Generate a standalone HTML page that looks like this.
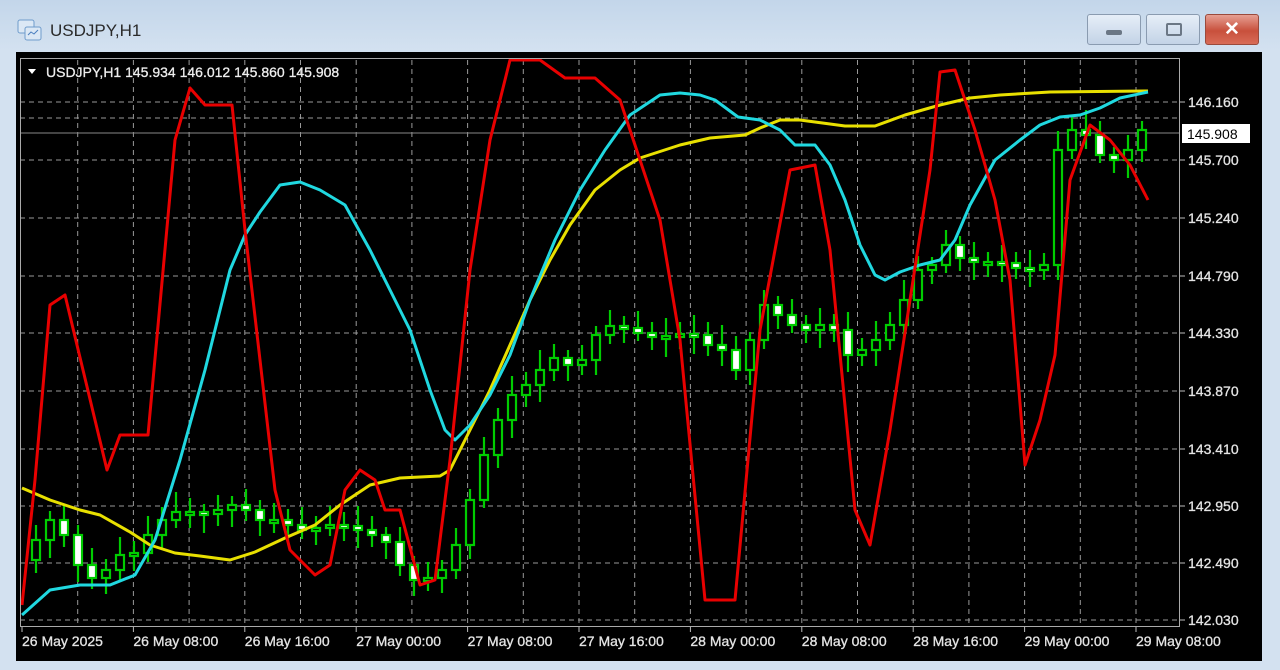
<!DOCTYPE html>
<html><head><meta charset="utf-8"><style>
html,body{margin:0;padding:0;width:1280px;height:670px;overflow:hidden;background:#cddcec;font-family:"Liberation Sans",sans-serif}
.win{position:absolute;left:0;top:0;width:1280px;height:670px;background:linear-gradient(#c3d6ea,#d3e1f0 50px,#d3e1f0)}
.title{position:absolute;left:50px;top:21px;font-size:17px;color:#2a2a2a}
.btn{position:absolute;top:14px;height:29px;border:1px solid #8a9bb0;border-radius:3px;background:linear-gradient(#e6eef8,#c3d3e6)}
</style></head><body><div class="win">
<svg style="position:absolute;left:16px;top:18px" width="28" height="26" viewBox="0 0 28 26"><rect x="2" y="2" width="16" height="13" rx="2" fill="#dbe8f5" stroke="#6f9ccc"/><rect x="9" y="9" width="16" height="13" rx="2" fill="#dbe8f5" stroke="#6f9ccc"/><path d="M12 17l3-3 3 2 4-4" stroke="#4a7fbf" fill="none"/></svg>
<div class="title">USDJPY,H1</div>
<div class="btn" style="left:1087px;width:52px"><div style="position:absolute;left:18px;top:15px;width:16px;height:5px;background:#6b7785;border-radius:2px"></div></div>
<div class="btn" style="left:1146px;width:52px"><div style="position:absolute;left:19px;top:8px;width:12px;height:9px;border:2px solid #6b7785;border-radius:2px"></div></div>
<div class="btn" style="left:1205px;width:52px;background:linear-gradient(#e6a093,#c8503c 55%,#d86c58);border-color:#9a4a3c"><div style="position:absolute;left:0;top:3px;width:52px;text-align:center;color:#fff;font-weight:bold;font-size:19px">✕</div></div>
<svg id="c" style="position:absolute;left:16px;top:52px" width="1246" height="609" viewBox="16 52 1246 609"></svg>
</div>
<script>
var s=document.getElementById('c'),h='';
h+='<rect x="16" y="52" width="1246" height="609" fill="#000"/>';
var ys=[102,160,218,276,333,391,449,506,563,620],lb=['146.160','145.700','145.240','144.790','144.330','143.870','143.410','142.950','142.490','142.030'];
for(var i=0;i<ys.length;i++){h+='<line x1="20" x2="1180" y1="'+ys[i]+'" y2="'+ys[i]+'" stroke="#999" stroke-dasharray="5,4"/>';h+='<line x1="1180" x2="1185" y1="'+ys[i]+'" y2="'+ys[i]+'" stroke="#bbb"/>';h+='<text x="1188" y="'+(ys[i]+5)+'" fill="#e4e4e4" font-size="14" stroke="#e4e4e4" stroke-width="0.3">'+lb[i]+'</text>';}
h+='<line x1="20" x2="1180" y1="118" y2="118" stroke="#999" stroke-dasharray="5,4"/>';
for(var k=1;k<21;k++){var x=22+55.7*k;if(x<1178)h+='<line x1="'+x+'" x2="'+x+'" y1="60" y2="625" stroke="#999" stroke-dasharray="5,4"/>';}
var tl=['26 May 2025','26 May 08:00','26 May 16:00','27 May 00:00','27 May 08:00','27 May 16:00','28 May 00:00','28 May 08:00','28 May 16:00','29 May 00:00','29 May 08:00'];
for(var k=0;k<tl.length;k++){var x=22+111.4*k;h+='<line x1="'+x+'" x2="'+x+'" y1="627" y2="632" stroke="#bbb"/><text x="'+x+'" y="646" fill="#e4e4e4" font-size="14" stroke="#e4e4e4" stroke-width="0.3">'+tl[k]+'</text>';}
h+='<line x1="20" x2="1180" y1="133" y2="133" stroke="#888"/>';
var m=[[22,560],[36,540],[50,520],[64,535],[78,565],[92,578],[106,570],[120,555],[134,553],[148,535],[162,520],[176,512],[190,512],[204,514],[218,510],[232,505],[246,510],[260,520],[274,520],[288,525],[302,530],[316,528],[330,525],[344,526],[358,530],[372,535],[386,542],[400,565],[414,580],[428,578],[442,570],[456,545],[470,500],[484,455],[498,420],[512,395],[526,385],[540,370],[554,358],[568,365],[582,360],[596,335],[610,326],[624,328],[638,333],[652,337],[666,336],[680,334],[694,335],[708,345],[722,350],[736,370],[750,340],[764,305],[778,315],[792,325],[806,330],[820,325],[834,330],[848,355],[862,350],[876,340],[890,325],[904,300],[918,270],[932,265],[946,245],[960,258],[974,262],[988,262],[1002,263],[1016,268],[1030,270],[1044,265],[1058,150],[1072,130],[1086,135],[1100,155],[1114,160],[1128,150],[1142,130]];
for(var i=1;i<m.length;i++){var x=m[i][0],o=m[i-1][1],c=m[i][1],t=Math.min(o,c),b=Math.max(o,c);if(b-t<3){b=t+3;}
var hh=8+(i*7%13),ll=8+(i*5%11);
h+='<line x1="'+x+'" x2="'+x+'" y1="'+(t-hh)+'" y2="'+(b+ll)+'" stroke="#0c0" stroke-width="2.2"/>';
h+='<rect x="'+(x-4)+'" y="'+t+'" width="8" height="'+(b-t)+'" fill="'+(c>o?'#fff':'#000')+'" stroke="#0c0" stroke-width="2.2"/>';}
function pl(p,col){h+='<polyline fill="none" stroke="'+col+'" stroke-width="3" stroke-linejoin="round" points="'+p+'"/>';}
pl('22,488 50,500 80,510 100,515 130,532 150,545 175,553 200,556 230,560 255,552 285,538 315,525 340,505 370,485 400,478 440,476 450,470 470,430 490,390 510,345 530,300 550,260 570,225 595,190 620,170 640,158 680,145 710,138 745,135 760,128 780,120 800,120 830,124 845,126 875,126 905,115 940,105 970,98 1000,95 1050,92 1148,91','#e8e000');
pl('22,615 50,590 80,585 110,585 135,575 155,540 180,460 205,370 230,270 245,235 260,212 280,185 300,182 320,190 345,205 370,250 390,290 410,330 430,390 445,430 455,440 470,425 490,395 510,355 530,300 555,240 580,190 605,150 630,115 660,95 680,93 700,95 715,100 738,117 760,120 780,130 795,145 815,145 830,165 845,200 860,245 875,275 885,280 900,272 920,265 940,260 955,240 970,205 995,160 1020,140 1040,125 1060,117 1080,115 1100,108 1120,98 1148,92','#20d8e0');
pl('22,605 35,480 50,305 65,295 107,470 120,435 148,435 175,140 190,88 205,105 232,105 245,230 275,490 290,550 315,575 330,565 345,490 360,470 375,480 385,510 400,510 420,585 435,580 450,460 470,270 490,140 510,60 540,60 565,78 595,78 620,100 640,160 660,220 680,340 705,600 735,600 760,330 790,170 815,165 830,250 855,510 870,545 890,430 910,300 930,170 940,72 955,70 975,130 995,200 1010,280 1025,465 1040,420 1055,355 1070,180 1090,125 1110,140 1130,165 1148,200','#e80000');
h+='<rect x="16" y="52" width="1246" height="6" fill="#000"/>';
h+='<rect x="20.5" y="58.5" width="1159" height="568" fill="none" stroke="#aaa"/>';
h+='<path d="M28 69h8l-4 5z" fill="#fff"/><text x="46" y="77" fill="#eee" font-size="14" stroke="#eee" stroke-width="0.3">USDJPY,H1  145.934 146.012 145.860 145.908</text>';
h+='<rect x="1182" y="124" width="68" height="19" fill="#fff"/><text x="1187" y="139" fill="#000" font-size="14">145.908</text>';
s.innerHTML=h;
</script></body></html>
